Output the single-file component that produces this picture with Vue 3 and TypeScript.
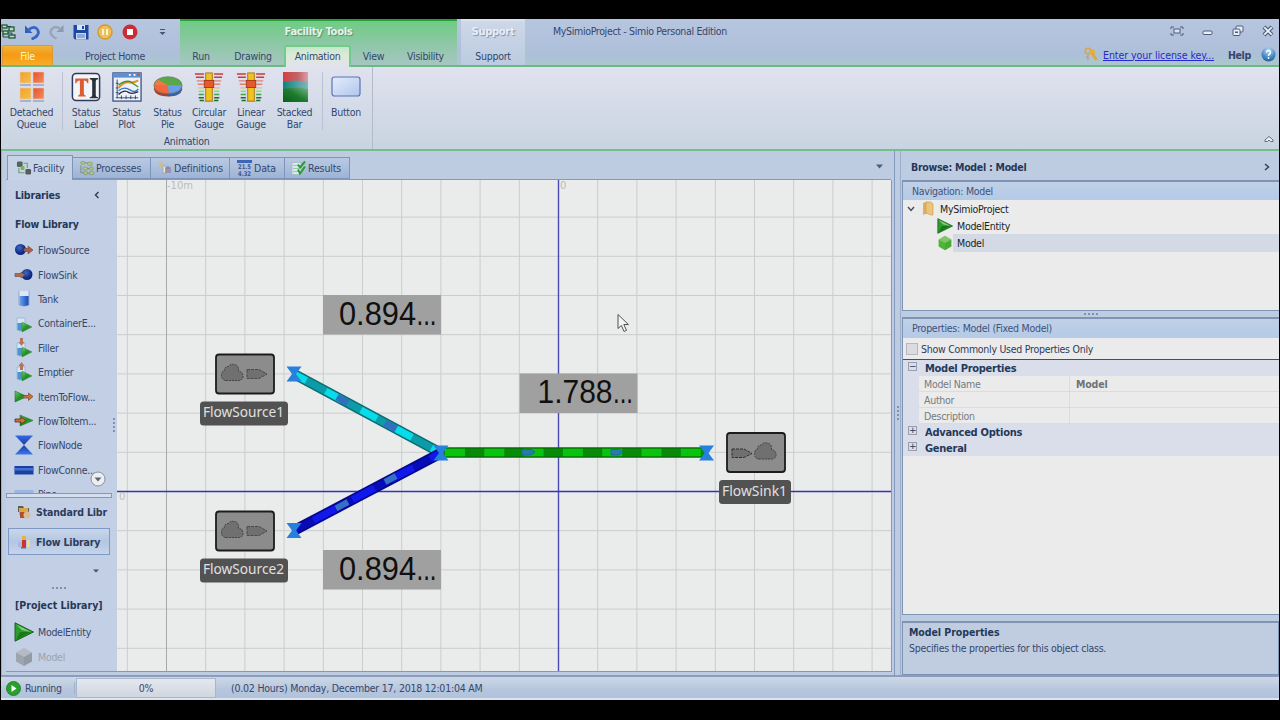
<script setup lang="ts">
interface Item { label: string; icon: string; cls?: string }

const tools: Item[] = [
  { label: 'Status Label', icon: 'label', cls: 'w40' },
  { label: 'Status Plot', icon: 'plot', cls: 'w41' },
  { label: 'Status Pie', icon: 'pie', cls: 'w41' },
  { label: 'Circular Gauge', icon: 'gauge', cls: 'w42' },
  { label: 'Linear Gauge', icon: 'gauge', cls: 'w42' },
  { label: 'Stacked Bar', icon: 'stack', cls: 'w45' },
]

const views: Item[] = [
  { label: 'Facility', icon: 'facility', cls: 'v-facility' },
  { label: 'Processes', icon: 'processes', cls: 'v-processes' },
  { label: 'Definitions', icon: 'definitions', cls: 'v-definitions' },
  { label: 'Data', icon: 'data', cls: 'v-data' },
  { label: 'Results', icon: 'results', cls: 'v-results' },
]

const library: Item[] = [
  { label: 'FlowSource', icon: 'source' },
  { label: 'FlowSink', icon: 'sink' },
  { label: 'Tank', icon: 'tank' },
  { label: 'ContainerE...', icon: 'container' },
  { label: 'Filler', icon: 'filler' },
  { label: 'Emptier', icon: 'emptier' },
  { label: 'ItemToFlow...', icon: 'itf' },
  { label: 'FlowToItem...', icon: 'fti' },
  { label: 'FlowNode', icon: 'node' },
  { label: 'FlowConne...', icon: 'conn' },
  { label: 'Pipe', icon: 'pipe' },
]

const vLines: number[] = Array.from({ length: 20 }, (_, i) => 127.3 + i * 39.2)
const hLines: number[] = Array.from({ length: 12 }, (_, i) => 217.1 + i * 39.2)

const readouts = [
  { x: 323, y: 295, v: '0.894', tx: 16, tw: 77 },
  { x: 519.5, y: 373.5, v: '1.788', tx: 18, tw: 75 },
  { x: 323, y: 550, v: '0.894', tx: 16, tw: 77 },
]
const objects = [
  { x: 215, y: 353.5, name: 'FlowSource1', lx: 200, lw: 88, sink: false },
  { x: 215, y: 510.5, name: 'FlowSource2', lx: 200, lw: 88, sink: false },
  { x: 726, y: 432, name: 'FlowSink1', lx: 719, lw: 72, sink: true },
]
const nodes = [
  { x: 294, y: 374 },
  { x: 441, y: 453 },
  { x: 294, y: 530.5 },
  { x: 706.5, y: 453 },
]
const props = [
  { name: 'Model Name', value: 'Model' },
  { name: 'Author', value: '' },
  { name: 'Description', value: '' },
]
</script>

<template>
  <div class="screen">
    <svg class="defs" width="0" height="0">
      <defs>
        <linearGradient id="gOr" x1="0" y1="0" x2="1" y2="1"><stop offset="0" stop-color="#f6a02c" /><stop offset="1" stop-color="#f0c04c" /></linearGradient>
        <linearGradient id="gRd" x1="0" y1="0" x2="1" y2="1"><stop offset="0" stop-color="#e8502c" /><stop offset="1" stop-color="#f09060" /></linearGradient>
        <linearGradient id="gBt" x1="0" y1="0" x2="1" y2="1"><stop offset="0" stop-color="#e4ecfa" /><stop offset="1" stop-color="#b0c6ee" /></linearGradient>
        <linearGradient id="gGn" x1="0" y1="0" x2="1" y2="1"><stop offset="0" stop-color="#7cc878" /><stop offset=".5" stop-color="#1f8f22" /><stop offset="1" stop-color="#4cb848" /></linearGradient>
        <linearGradient id="gSr" x1="0" y1="0" x2="1" y2="0"><stop offset="0" stop-color="#d04040" /><stop offset=".6" stop-color="#c46468" /><stop offset="1" stop-color="#d8a0a8" /></linearGradient>
        <linearGradient id="gSt" x1="0" y1="0" x2="1" y2="0"><stop offset="0" stop-color="#108080" /><stop offset="1" stop-color="#80b8bc" /></linearGradient>
        <linearGradient id="gSg" x1="0" y1="1" x2="1" y2="0"><stop offset="0" stop-color="#086018" /><stop offset=".5" stop-color="#1c7c30" /><stop offset="1" stop-color="#78b488" /></linearGradient>
        <linearGradient id="gTk" x1="0" y1="0" x2="1" y2="0"><stop offset="0" stop-color="#6ca4ec" /><stop offset="1" stop-color="#1848b8" /></linearGradient>
        <linearGradient id="gNd" x1="0" y1="0" x2="0" y2="1"><stop offset="0" stop-color="#3468e0" /><stop offset=".5" stop-color="#1c3ca8" /><stop offset="1" stop-color="#3c78e8" /></linearGradient>
        <radialGradient id="gBl" cx=".4" cy=".35"><stop offset="0" stop-color="#4068c8" /><stop offset="1" stop-color="#102880" /></radialGradient>
        <radialGradient id="gHp" cx=".5" cy=".2" r=".8"><stop offset="0" stop-color="#b8dcf4" /><stop offset=".6" stop-color="#4c90c8" /><stop offset="1" stop-color="#285c98" /></radialGradient>
      </defs>
      <symbol id="i-queue" viewBox="0 0 30 32">
        <g stroke="#e8ccb8" stroke-width=".6"><rect x="3" y="1" width="11" height="11" fill="url(#gOr)" /><rect x="16" y="1" width="11" height="11" fill="url(#gRd)" /><rect x="3" y="17" width="11" height="11" fill="url(#gOr)" /><rect x="16" y="17" width="11" height="11" fill="url(#gRd)" /></g>
        <path d="M3 13h11v2H3zM16 13h11v2H16zM3 29h11v2H3zM16 29h11v2H16z" fill="#a4b4d8" />
      </symbol>
      <symbol id="i-label" viewBox="0 0 32 32">
        <rect x="1.5" y="1.5" width="29" height="29" rx="4" fill="#f4f5f9" stroke="#2c3c60" stroke-width="1.6" />
        <path d="M4.500 7h14v5h-1.200q-.5-3-3.600-3v14q0 2 2 2v1.200H7.500V25q2 0 2-2V9Q6.400 9 5.700 12H4.500z" fill="#dc5c34" />
        <path d="M20 6.500h9v1.300q-2.600 0-2.600 2v15q0 2 2.600 2V28H20v-1.200q2.600 0 2.600-2v-15q0-2-2.600-2z" fill="#283038" />
      </symbol>
      <symbol id="i-plot" viewBox="0 0 32 32">
        <rect x="1" y="1" width="30" height="30" fill="#eef1f8" stroke="#3c5488" stroke-width="1.400" /><path d="M1 1h30v5H1z" fill="#5c90d0" />
        <path d="M18 3h2M23 3h2" stroke="#fff" stroke-width="2" /><path d="M27 3h2.500" stroke="#d84c3c" stroke-width="2.500" />
        <path d="M5.500 8v20M4 27.500h24M4 12h3M4 17h3M4 22h3M10 25v4M15 25v4M20 25v4M25 25v4" stroke="#34486c" fill="none" />
        <path d="M7 17q6-7 11-6t10-2" stroke="#e89020" stroke-width="2.200" fill="none" /><path d="M7 14q6-5 12-4l9 6" stroke="#48942c" stroke-width="1.500" fill="none" />
        <path d="M7 20q6-5 12-1t9-1" stroke="#3474d0" stroke-width="1.500" fill="none" /><path d="M7 24q6-6 11-2 4 2 10-1" stroke="#2c2c38" stroke-width="1.500" fill="none" />
      </symbol>
      <symbol id="i-pie" viewBox="0 0 32 24">
        <path d="M1 10v5q2 7 15 7t15-7v-5z" fill="#a04434" /><path d="M16 21.900q13 0 15-7v-5H16z" fill="#3c60a8" /><ellipse cx="16" cy="10" rx="15" ry="9" fill="#58a848" />
        <path d="M16 10l1 9Q1 19 1 10z" fill="#f0683c" /><path d="M1 10Q2 7 5 4l11 6z" fill="#f07848" /><path d="M16 10h15q0 8-14 9z" fill="#6c9cec" /><ellipse cx="16" cy="10" rx="15" ry="9" fill="none" stroke="#5c8060" stroke-width=".7" />
      </symbol>
      <symbol id="i-gauge" viewBox="0 0 32 32">
        <path d="M1 2h30M2 5.500h28" stroke="#c83c38" stroke-width="1.600" /><path d="M3 9.500h26M4 13h24" stroke="#e08070" stroke-width="1.500" />
        <path d="M4.500 17h23" stroke="#d4c468" stroke-width="1.200" /><path d="M5 20.500h22" stroke="#98cc8c" stroke-width="1.500" /><path d="M5 24h22" stroke="#40a448" stroke-width="1.600" /><path d="M5 27.500h22M6 30.500h20" stroke="#187028" stroke-width="1.600" />
        <rect x="10.500" y="1" width="11" height="30" fill="#d4dae8" /><rect x="12.500" y="1" width="7" height="30" fill="#f0c420" stroke="#a87810" /><rect x="11" y="9" width="10" height="7.500" fill="#e8582c" stroke="#a83818" />
      </symbol>
      <symbol id="i-stack" viewBox="0 0 26 32"><rect x="1" y="1" width="25" height="10" fill="url(#gSr)" /><path d="M1 11q12-3 25 0v8H1z" fill="url(#gSt)" /><path d="M1 18q12-3 25 0v13H1z" fill="url(#gSg)" /></symbol>
      <symbol id="i-button" viewBox="0 0 30 22"><rect x="1" y="1" width="28" height="19" rx="2.500" fill="url(#gBt)" stroke="#5874b4" stroke-width="1.200" /></symbol>

      <symbol id="i-facility" viewBox="0 0 17 16"><rect x="1" y="1" width="6" height="6" rx="1.500" fill="#54645c" /><rect x="10" y="9" width="6" height="6" rx="1.500" fill="#545c60" /><rect x="5" y="6" width="4" height="4" fill="#78b450" /><path d="M8 3h4v5M3 8v5h6" fill="none" stroke="#7c9484" stroke-width="1.200" /></symbol>
      <symbol id="i-processes" viewBox="0 0 17 16"><g fill="#b8c878" stroke="#7c9068" stroke-width=".7"><rect x="2" y="1" width="4" height="3" rx="1" /><rect x="9" y="2" width="5" height="3" rx="1" /><rect x="4" y="7" width="5" height="3" rx="1" /><rect x="11" y="7" width="4" height="3" rx="1" /><rect x="5" y="12" width="4" height="3" rx="1" /><rect x="11" y="12" width="5" height="3" rx="1" /></g><path d="M6 2.500h3M2 5v8h3M9 8.500h2M9 13.500h2" fill="none" stroke="#688070" stroke-width=".8" /></symbol>
      <symbol id="i-definitions" viewBox="0 0 16 16"><path d="M4 1v7M1 4h6M2 2l4 4" stroke="#e0bc60" stroke-width="1" /><rect x="6" y="6" width="3" height="7" fill="#e8e4d0" stroke="#a09880" stroke-width=".6" /><path d="M9 13V8h4v5M11 6v7" fill="none" stroke="#8c84a8" stroke-width="1.400" /></symbol>
      <symbol id="i-results" viewBox="0 0 16 15"><rect x="1" y="2" width="9" height="12" fill="#dce8ec" stroke="#9cb8c4" stroke-width=".7" /><path d="M2 5h6M2 8h6M2 11h6" stroke="#9cc4b0" /><path d="M7 4l2 3 5-6M7 9l2 4 5-7" fill="none" stroke="#2c9c34" stroke-width="2" /></symbol>

      <symbol id="i-source" viewBox="0 0 20 20"><circle cx="6.500" cy="9.500" r="5.500" fill="url(#gBl)" /><path d="M10 8.500h4V6l5 4-5 4v-2.500h-4z" fill="#a8624c" stroke="#6c4440" stroke-width=".6" /></symbol>
      <symbol id="i-sink" viewBox="0 0 20 20"><circle cx="13" cy="9.500" r="5.500" fill="url(#gBl)" /><path d="M1 8.500h6V7l4 3-4 3v-1.500H1z" fill="#a8704c" stroke="#6c4440" stroke-width=".6" /></symbol>
      <symbol id="i-tank" viewBox="0 0 20 20"><path d="M5 2v14q5 2.500 10 0V2" fill="#dce8f8" stroke="#88a0cc" stroke-width=".8" /><path d="M5.400 7h9.200v9q-4.600 2-9.200 0z" fill="url(#gTk)" /></symbol>
      <symbol id="i-vessel" viewBox="0 0 20 20"><path d="M3 5v12q4 2 8 0V5z" fill="#d4e8f4" stroke="#90b0cc" stroke-width=".7" /><path d="M3.400 10h7v7q-3.500 1.500-7 0z" fill="#4c94cc" /><path d="M8 9l10 5-10 5z" fill="url(#gGn)" stroke="#2c7838" stroke-width=".4" /></symbol>
      <symbol id="i-container" viewBox="0 0 20 20"><use href="#i-vessel" /></symbol>
      <symbol id="i-filler" viewBox="0 0 20 20"><use href="#i-vessel" /><path d="M6 0h3v4h1.500l-3 4-3-4H6z" fill="#b47460" /></symbol>
      <symbol id="i-emptier" viewBox="0 0 20 20"><use href="#i-vessel" /><path d="M6 8V4H4.500l3-4 3 4H9v4z" fill="#b47460" /></symbol>
      <symbol id="i-itf" viewBox="0 0 20 20"><path d="M1 4l12 5.500L1 15z" fill="url(#gGn)" stroke="#146018" stroke-width=".5" /><path d="M9 8.500h5.500V6l4.500 3.500-4.500 4V11H9z" fill="#c87040" stroke="#703818" stroke-width=".6" /></symbol>
      <symbol id="i-fti" viewBox="0 0 20 20"><path d="M6 4l13 5.500L6 15z" fill="url(#gGn)" stroke="#146018" stroke-width=".5" /><path d="M1 8h6V5.500l5 4-5 4V11H1z" fill="#c87040" stroke="#602c18" stroke-width=".8" /></symbol>
      <symbol id="i-node" viewBox="0 0 20 20"><path d="M1 .5h18L10 10zM1 19.500h18L10 10z" fill="url(#gNd)" /></symbol>
      <symbol id="i-conn" viewBox="0 0 20 20"><rect x=".5" y="6" width="19" height="8.500" fill="#1c40a0" /><rect x=".5" y="8" width="19" height="2.500" fill="#4470d0" /></symbol>
      <symbol id="i-pipe" viewBox="0 0 20 20"><rect x=".5" y="6" width="19" height="7" fill="#9cb4e0" /></symbol>
      <symbol id="i-entity" viewBox="0 0 20 20"><path d="M1 .8L19.500 10 1 19.200z" fill="#2c9c2c" stroke="#145c18" stroke-width=".9" /><path d="M2 2.500L17 10 8 8z" fill="#a4dc9c" opacity=".8" /><path d="M2 18L6 10l11 0z" fill="#167a1a" /></symbol>
      <symbol id="i-cube" viewBox="0 0 20 20"><path d="M10 1l8 4.500v9L10 19l-8-4.500v-9z" fill="currentColor" /><path d="M10 1l8 4.500L10 10 2 5.500z" fill="#fff" opacity=".25" /><path d="M10 10l8-4.500v9L10 19z" fill="#000" opacity=".06" /></symbol>
      <symbol id="i-std" viewBox="0 0 16 16"><path d="M2 2h5l1 2h5v4H2z" fill="#645c50" /><path d="M3 4h9v7H3z" fill="#d8a848" /><rect x="4" y="8" width="6" height="6" fill="#b44c30" /><circle cx="11" cy="11" r="3.500" fill="#d4c098" /></symbol>
      <symbol id="i-flow" viewBox="0 0 16 16"><rect x="6" y="2" width="4" height="4" fill="#e8b048" /><rect x="2" y="8" width="4" height="5" fill="#a8b8e0" /><rect x="6" y="6" width="4" height="7" fill="#cc3434" /><path d="M11 6h3v7h-3z" fill="#f0dc84" /><path d="M5 13h5v1.500H5z" fill="#5868b0" /></symbol>
      <symbol id="i-cloud" viewBox="0 0 24 20"><path d="M5 18q-4-1-4-5t3-5q0-4 4-4 2-3 5-2 4 0 5 4v3q4 0 4.500 4t-3.500 5z" fill="#707070" stroke="#404040" stroke-width="1" stroke-dasharray="2 1" /></symbol>
    </svg>

    <div class="window">
      <header class="top">
        <div class="block quick">
          <div class="qa">
            <svg width="15" height="16" viewBox="0 0 15 16"><g fill="#b4dcbc" stroke="#1c4c30" stroke-width="1.200"><rect x="1" y="1" width="5" height="3" /><rect x="8" y="3" width="5" height="4" /><rect x="2" y="7" width="5" height="3" /><rect x="8" y="11" width="6" height="3" /></g><path d="M6 2.500h4M1 5v3M7 9h4v2M2 10v3h6" fill="none" stroke="#1c4c30" /></svg>
            <svg class="q-undo" width="17" height="16" viewBox="0 0 17 16"><path d="M1 1.500v7.500h7.500z" fill="#2c60c0" /><path d="M4 6.500q4-4.500 8-2.500 4 3 1.500 7-1.500 3-6 4" fill="none" stroke="#3468c4" stroke-width="2.800" /></svg>
            <svg class="q-redo" width="17" height="16" viewBox="0 0 17 16"><path d="M15.500 1v7h-7z" fill="#8c98ac" /><path d="M13 6Q9 1.500 5 4 1 7 3.500 11q1.500 2 5 3.500" fill="none" stroke="#98a4b8" stroke-width="2.400" /></svg>
            <svg class="q-save" width="16" height="16" viewBox="0 0 16 16"><path d="M.5 1h15v14.500H2L.5 14z" fill="#1c48a4" /><rect x="4" y="1" width="8" height="5" fill="#d8e4f4" /><path d="M9 2h2v3H9z" fill="#1c48a4" /><rect x="3" y="9" width="10" height="6.500" fill="#c8d8f0" /><path d="M4 11h8M4 13h8" stroke="#5878b8" /></svg>
            <svg class="q-pause" width="16" height="16" viewBox="0 0 16 16"><circle cx="8" cy="8" r="7" fill="#ecc05c" stroke="#d8982c" stroke-width="1.400" /><path d="M6 5v6M10 5v6" stroke="#fff4d0" stroke-width="2" /></svg>
            <svg class="q-stop" width="16" height="16" viewBox="0 0 16 16"><circle cx="8" cy="8" r="7.500" fill="#cc2c34" /><rect x="5" y="5" width="6" height="6" fill="#fff" /></svg>
            <svg class="q-more" width="7" height="8" viewBox="0 0 7 8"><path d="M1 1.500h5" stroke="#445478" /><path d="M.5 4h6l-3 3z" fill="#445478" /></svg>
          </div>
          <div class="tabs"><span class="tab file">File</span><span class="tab home">Project Home</span></div>
        </div>
        <div class="block green">
          <div class="ctx">Facility Tools</div>
          <div class="tabs"><span class="tab t-run">Run</span><span class="tab t-draw">Drawing</span><span class="tab t-anim">Animation</span><span class="tab t-view">View</span><span class="tab t-vis">Visibility</span></div>
        </div>
        <div class="block support">
          <div class="ctx pale">Support</div>
          <div class="tabs"><span class="tab t-sup">Support</span></div>
        </div>
        <div class="block rest">
          <div class="titlebar">
            <span class="title">MySimioProject - Simio Personal Edition</span>
            <span class="wins">
              <svg width="14" height="12" viewBox="0 0 14 12"><path d="M1 4V2h3M10 2h3v2M13 8v2h-3M4 10H1V8" fill="none" stroke="#4c5c7c" /><rect x="4" y="4" width="6" height="4" fill="#dce4f0" stroke="#4c5c7c" /></svg>
              <svg width="12" height="12" viewBox="0 0 12 12"><rect x="1" y="6" width="9" height="3.500" rx="1" fill="#e8eef8" stroke="#4c5c7c" /></svg>
              <svg width="12" height="12" viewBox="0 0 12 12"><rect x="4" y="1" width="7" height="6" rx="1" fill="#e8eef8" stroke="#4c5c7c" /><rect x="1" y="4" width="7" height="6.500" rx="1" fill="#e8eef8" stroke="#4c5c7c" /><rect x="3" y="6.500" width="3" height="1.500" fill="#4c5c7c" /></svg>
              <svg width="12" height="12" viewBox="0 0 12 12"><path d="M2 2l8 8M10 2l-8 8" stroke="#4c5c7c" stroke-width="4" /><path d="M2.300 2.300l7.400 7.400M9.700 2.300L2.300 9.700" stroke="#f0f4fa" stroke-width="1.800" /></svg>
            </span>
          </div>
          <div class="license">
            <svg width="14" height="15" viewBox="0 0 14 15"><circle cx="4" cy="4" r="2.800" fill="none" stroke="#d8a848" stroke-width="1.600" /><path d="M4 6v7M4 10H2" stroke="#b8a490" stroke-width="1.500" /><circle cx="8" cy="5" r="3" fill="#e4b03c" /><path d="M8 6l4.500 7" stroke="#e0a830" stroke-width="2.600" /></svg>
            <a class="link">Enter your license key...</a>
            <b class="help">Help</b>
            <svg width="15" height="15" viewBox="0 0 15 15"><circle cx="7.500" cy="7.500" r="7" fill="url(#gHp)" /><path d="M5.500 5.500q0-2 2-2t2 2q0 1-1 1.500t-1 2" fill="none" stroke="#fff" stroke-width="1.400" /><circle cx="7.500" cy="11" r=".9" fill="#fff" /></svg>
          </div>
        </div>
      </header>

      <section class="ribbon">
        <div class="group">
          <div class="tools">
            <div class="tool w61"><svg width="30" height="32"><use href="#i-queue" /></svg><span>Detached Queue</span></div>
            <i class="sep" />
            <div class="toolset"><div v-for="t in tools" :key="t.label" class="tool" :class="t.cls"><svg width="30" height="32"><use :href="'#i-' + t.icon" /></svg><span>{{ t.label }}</span></div></div>
            <i class="sep" />
            <div class="tool w46"><svg width="30" height="32"><use href="#i-button" /></svg><span>Button</span></div>
          </div>
          <div class="gname">Animation</div>
        </div>
        <svg class="collapse" width="10" height="8" viewBox="0 0 10 8"><path d="M1 5l4-3.500L9 5v1.500H6.500L5 5 3.500 6.500H1z" fill="#eef2f8" stroke="#4c5c7c" stroke-width=".9" /></svg>
      </section>

      <main class="body">
        <section class="left">
          <nav class="views">
            <span v-for="(v, i) in views" :key="v.label" class="view" :class="[v.cls, { active: i === 0 }]">
              <svg v-if="v.icon === 'data'" class="dicon" width="16" height="16" viewBox="0 0 16 16"><rect x="0" y="0" width="15" height="3" fill="#3c64b8" /><text x="1" y="9" textLength="13" lengthAdjust="spacingAndGlyphs">21.5</text><text x="1" y="15.500" textLength="13" lengthAdjust="spacingAndGlyphs">4.32</text></svg>
              <svg v-else width="16" height="16"><use :href="'#i-' + v.icon" /></svg>{{ v.label }}</span>
            <svg class="vmenu" width="7" height="5" viewBox="0 0 7 5"><path d="M0 .5h7L3.500 4.500z" fill="#4c5c84" /></svg>
          </nav>
          <div class="work">
            <aside class="side">
              <div class="shead">Libraries<svg width="6" height="8" viewBox="0 0 6 8"><path d="M4.500 1L1.500 4l3 3" fill="none" stroke="#34405c" stroke-width="1.500" /></svg></div>
              <div class="shead second">Flow Library</div>
              <div class="list">
                <div v-for="l in library" :key="l.label" class="row"><svg width="20" height="20"><use :href="'#i-' + l.icon" /></svg>{{ l.label }}</div>
                <svg class="scroll" width="16" height="16" viewBox="0 0 16 16"><circle cx="8" cy="8" r="7" fill="#eceef2" stroke="#8890a0" /><path d="M4.500 6.500h7L8 10.500z" fill="#5c6474" /></svg>
              </div>
              <div class="splitbar" />
              <div class="lib"><svg width="16" height="16"><use href="#i-std" /></svg>Standard Libr</div>
              <div class="lib on"><svg width="16" height="16"><use href="#i-flow" /></svg>Flow Library</div>
              <div class="more"><svg width="6" height="4" viewBox="0 0 6 4"><path d="M0 .5h6l-3 3z" fill="#44506c" /></svg></div>
              <div class="dots"><i /><i /><i /><i /></div>
              <div class="shead proj">[Project Library]</div>
              <div class="row"><svg width="20" height="20"><use href="#i-entity" /></svg>ModelEntity</div>
              <div class="row dim"><svg width="20" height="20"><use href="#i-cube" /></svg>Model</div>
              <div class="dots vert"><i /><i /><i /><i /></div>
            </aside>
            <svg class="canvas" width="774" height="491" viewBox="117 180 774 491">
              <g stroke="#cbcdcd"><line v-for="x in vLines" :key="'v' + x" :x1="x" :x2="x" y1="180" y2="671" /><line v-for="y in hLines" :key="'h' + y" :y1="y" :y2="y" x1="117" x2="891" /></g>
              <path d="M166.500 180v491" stroke="#a8a8a8" />
              <path d="M558.500 180v491" stroke="#4a4ab4" stroke-width="1.400" /><path d="M117 491.500h774" stroke="#3434b8" stroke-width="1.400" />
              <g class="axis"><text x="167" y="189">-10m</text><text x="560" y="189">0</text><text x="119" y="500">0</text></g>

              <g>
                <path d="M294 374L441 453" stroke="#0a6c74" stroke-width="10.500" /><path d="M294 374L441 453" stroke="#0c9ca8" stroke-width="7.500" /><path d="M294 374L441 453" stroke="#08dce8" stroke-width="7" stroke-dasharray="18 22" stroke-dashoffset="4" />
                <path d="M337 397l11 6M385 423l11 6" stroke="#3070bc" stroke-width="7" />
                <path d="M294 530.500L441 453" stroke="#04088c" stroke-width="10.500" /><path d="M294 530.500L441 453" stroke="#080cb8" stroke-width="7" /><path d="M294 530.500L441 453" stroke="#1018ec" stroke-width="7" stroke-dasharray="25 19" stroke-dashoffset="-22" />
                <path d="M336 508.500l12-6.500M385 482l11-6" stroke="#3470c8" stroke-width="6" />
                <path d="M441 452.500h266" stroke="#086c08" stroke-width="10.500" /><path d="M441 452.500h266" stroke="#078a07" stroke-width="7.500" /><path d="M445 452.500h259" stroke="#08c40c" stroke-width="7.500" stroke-dasharray="20 19.300" />
                <path d="M522 449.500h9l4 2.500-4 3h-9zM611 449.500h8l4 2.500-4 3h-8z" fill="#287ca8" stroke="#1c6c98" />
              </g>
              <path v-for="n in nodes" :key="n.x + '-' + n.y" :transform="`translate(${n.x} ${n.y})`" d="M-7.500-7.500H7.500L2 0 7.500 7.500H-7.500L-2 0z" fill="#2680dc" />

              <g v-for="r in readouts" :key="r.y" :transform="`translate(${r.x} ${r.y})`" class="read">
                <rect width="118" height="39.500" fill="#a0a0a0" /><text :x="r.tx" y="29.500" :textLength="r.tw" lengthAdjust="spacingAndGlyphs">{{ r.v }}</text><text x="93.500" y="29.500" textLength="20" lengthAdjust="spacingAndGlyphs">...</text>
              </g>

              <g v-for="o in objects" :key="o.name">
                <rect :x="o.x + 1" :y="o.y + 1" width="58" height="39" rx="3" fill="#8c8c8c" stroke="#1c1c1c" stroke-width="1.800" />
                <g v-if="!o.sink"><use href="#i-cloud" :x="o.x + 5" :y="o.y + 9" width="25" height="20" /><path :transform="`translate(${o.x + 32} ${o.y + 16})`" d="M0 0h12l8 4.500-8 4.500H0z" fill="#707070" stroke="#484848" stroke-dasharray="3 1" /></g>
                <g v-else><path :transform="`translate(${o.x + 6} ${o.y + 17})`" d="M0 0h12l8 4.500-8 4H0z" fill="#707070" stroke="#303030" stroke-dasharray="3 1" /><use href="#i-cloud" :x="o.x + 27" :y="o.y + 9" width="25" height="20" /></g>
                <rect :x="o.lx" :y="o.y + 48" :width="o.lw" height="24" rx="3.500" fill="#525252" />
                <text class="oname" :x="o.lx + 3" :y="o.y + 63.500" :textLength="o.lw - 7" lengthAdjust="spacingAndGlyphs">{{ o.name }}</text>
              </g>
              <path d="M618 314.500v14l3.400-3 2.600 6 2.500-1.200-2.700-5.800h4.600z" fill="#f4f4f4" stroke="#404040" stroke-width=".9" />
            </svg>
          </div>
        </section>
        <div class="dots gutter"><i /><i /><i /><i /></div>
        <section class="right">
          <div class="browse">Browse: Model : Model<svg width="6" height="8" viewBox="0 0 6 8"><path d="M1 1l3.500 3L1 7" fill="none" stroke="#34405c" stroke-width="1.500" /></svg></div>
          <div class="panel nav">
            <div class="ph">Navigation: Model</div>
            <div class="tree">
              <div class="tr"><svg width="8" height="6" viewBox="0 0 8 6"><path d="M1 1l3 3.500L7 1" fill="none" stroke="#404c60" stroke-width="1.400" /></svg><svg class="folder" width="12" height="15" viewBox="0 0 12 15"><path d="M1 2l4-1.500v12L1 14z" fill="#e0b060" /><path d="M4 1h5l2 2v11H9L4 12z" fill="#ecc47c" stroke="#c89848" stroke-width=".6" /></svg><span>MySimioProject</span></div>
              <div class="tr lvl"><svg width="16" height="16"><use href="#i-entity" /></svg><span>ModelEntity</span></div>
              <div class="tr lvl"><svg class="gcube" width="16" height="16"><use href="#i-cube" /></svg><span class="sel">Model</span></div>
            </div>
          </div>
          <div class="dots mid"><i /><i /><i /><i /></div>
          <div class="panel pp">
            <div class="ph">Properties: Model (Fixed Model)</div>
            <div class="check"><i />Show Commonly Used Properties Only</div>
            <div class="pg">
              <div class="cat"><b class="box">−</b>Model Properties</div>
              <div v-for="p in props" :key="p.name" class="prop"><span>{{ p.name }}</span><b>{{ p.value }}</b></div>
              <div class="cat"><b class="box">+</b>Advanced Options</div>
              <div class="cat"><b class="box">+</b>General</div>
            </div>
          </div>
          <div class="desc"><b>Model Properties</b><span>Specifies the properties for this object class.</span></div>
        </section>
      </main>

      <footer class="status">
        <svg width="15" height="15" viewBox="0 0 15 15"><circle cx="7.500" cy="7.500" r="7" fill="#28a02c" stroke="#187820" stroke-width=".8" /><path d="M5.500 4l5 3.500-5 3.500z" fill="#fff" /></svg>
        <span class="run">Running</span><span class="prog">0%</span><span class="time">(0.02 Hours) Monday, December 17, 2018 12:01:04 AM</span>
      </footer>
    </div>
  </div>
</template>

<style>
html, body { background: #000; }
</style>
<style scoped>
* { box-sizing: border-box; }
.screen { width: 1280px; height: 720px; background: #000; padding: 19px 1px 21px; overflow: hidden; font-family: "DejaVu Sans Condensed", "DejaVu Sans", sans-serif; font-stretch: condensed; font-size: 10.5px; letter-spacing: -0.27px; color: #36466c; white-space: nowrap; }
.defs { position: absolute; }
svg { flex: none; display: block; }
b { letter-spacing: -0.35px; }
.window { height: 680px; background: #bdcce1; display: flex; flex-direction: column; }
.top { height: 48px; flex: none; display: flex; background: linear-gradient(#b7c6df, #aebfda 75%, #abc8cc); border-bottom: 2px solid #6cb884; }
.block { display: flex; flex-direction: column; flex: none; }
.quick { width: 179px; }
.qa { height: 25px; margin-bottom: 1px; display: flex; align-items: center; }
.q-undo { margin-left: 8px; } .q-redo { margin-left: 7px; } .q-save { margin-left: 8px; } .q-pause { margin-left: 8px; } .q-stop { margin-left: 9px; } .q-more { margin-left: 21px; }
.tabs { display: flex; height: 20px; }
.tab { display: flex; align-items: center; justify-content: center; padding-top: 2px; }
.file { width: 51px; margin-left: 1px; background: linear-gradient(#f0b43c, #f59a12 45%, #f8ac28); color: #fff4c8; border: 1px solid #d89a38; border-bottom: 0; border-radius: 2px 2px 0 0; padding-top: 0; }
.home { width: 124px; }
.green { width: 277px; background: linear-gradient(#6fcb84, #8cc8a4 50%, #a6c6c2); border-top: 2px solid #28a03c; }
.ctx { height: 24px; padding-bottom: 4px; display: flex; align-items: center; justify-content: center; font-weight: bold; color: #e4f4e8; text-shadow: 1px 1px 1px #5c8c74; font-size: 11px; }
.t-run { width: 42px; } .t-draw { width: 62px; } .t-anim { width: 67px; background: linear-gradient(#c4e8cc, #dcead8 40%, #e2e2ec); border: 2px solid #70cc88; border-bottom: 0; border-radius: 3px 3px 0 0; height: 22px; padding-top: 0; padding-bottom: 2px; } .t-view { width: 45px; } .t-vis { width: 59px; } .t-sup { width: 100%; }
.support { width: 64px; margin-left: 4px; background: linear-gradient(#cdd8e8, #bccbe0); border-top: 2px solid #d8e0ec; }
.pale { color: #e8eef8; text-shadow: 1px 1px 1px #8090b0; }
.rest { flex: 1; }
.titlebar { height: 25px; display: flex; align-items: center; justify-content: space-between; padding: 0 5px 2px 28px; }
.title { letter-spacing: -0.33px; }
.wins { display: flex; gap: 18px; }
.license { height: 21px; display: flex; align-items: center; justify-content: flex-end; padding-right: 3px; }
.link { color: #2828d0; text-decoration: underline; margin-left: 5px; width: 111px; letter-spacing: -0.06px; }
.help { width: 24px; margin: 0 9px 0 14px; }
.ribbon { height: 84px; flex: none; display: flex; justify-content: space-between; background: linear-gradient(#e0e2ee, #d4dbe8 50%, #c8d4e0); border-bottom: 2px solid #74bd8c; }
.group { width: 372px; border-right: 1px solid #b0bccc; }
.tools { display: flex; height: 67px; }
.toolset { display: flex; width: 259px; padding-left: 3px; }
.tool { display: flex; flex-direction: column; align-items: center; padding-top: 4px; }
.tool span { white-space: normal; text-align: center; line-height: 12px; margin-top: 3px; width: min-content; }
.sep { width: 1px; height: 58px; margin-top: 5px; background: #b8c2d2; }
.w61 { width: 61px; } .w40 { width: 40px; } .w41 { width: 41px; } .w42 { width: 42px; } .w45 { width: 45px; } .w46 { width: 46px; }
.gname { text-align: center; line-height: 14px; }
.collapse { margin: 68px 5px 0 0; }
.body { height: 526px; flex: none; display: flex; border-bottom: 2px solid #8c9cba; }
.left { width: 894px; padding: 4px 3px 0 4px; border-right: 1px solid #8498bc; border-left: 1px solid #a0b0cc; flex: none; }
.views { height: 25px; display: flex; align-items: flex-end; border-bottom: 1px solid #8498bc; letter-spacing: -0.15px; }
.view { height: 22px; display: flex; align-items: center; gap: 1px; background: linear-gradient(#b8c9e2, #9eb4d6); border: 1px solid #7f94bb; border-left: 0; padding-left: 6px; }
.view.active { height: 25px; background: #c6d3e6; border-left: 1px solid #8498bc; border-bottom: 0; margin-bottom: -1px; padding-left: 8px; margin-left: 1px; }
.v-facility { width: 66px; } .v-processes { width: 78px; } .v-definitions { width: 79px; } .v-data { width: 55px; } .v-results { width: 65px; }
.dicon { font-size: 6.5px; font-weight: bold; fill: #44588c; letter-spacing: 0; margin-left: 1px; }
.vmenu { margin: 0 8px 10px auto; }
.work { display: flex; height: 492px; width: 886px; border-right: 1px solid #8498bc; border-bottom: 1px solid #8498bc; }
.side { width: 111px; position: relative; flex: none; background: #c2cfe4; }
.shead { height: 30px; display: flex; align-items: center; justify-content: space-between; font-weight: bold; letter-spacing: -0.2px; color: #273757; padding: 0 17px 0 9px; }
.second { height: 28px; }
.list { height: 255px; overflow: hidden; position: relative; }
.row { height: 24.4px; display: flex; align-items: center; gap: 4px; padding-left: 8px; }
.scroll { position: absolute; left: 84px; top: 233px; }
.splitbar { width: 106px; height: 5px; border: 1px solid #7f98c4; background: #d4deee; }
.lib { height: 27px; margin: 0 7px 3px 2px; display: flex; align-items: center; gap: 4px; padding-left: 7px; font-weight: bold; color: #2c3c5c; border: 1px solid transparent; letter-spacing: -0.15px; }
.on { border-color: #7f98c4; background: linear-gradient(#c8d6ea, #b4c7e2 50%, #c4d4ea); }
.more { height: 25px; display: flex; justify-content: flex-end; align-items: center; padding-right: 18px; }
.dots { display: flex; gap: 2px; justify-content: center; }
.dots i { width: 2px; height: 2px; background: #8090b0; }
.side .dots { padding-right: 6px; padding-top: 4px; }
.proj { height: 30px; margin-top: 1px; letter-spacing: 0; padding-right: 0; }
.dim { color: #9ca4b0; }
.side .vert { position: absolute; flex-direction: column; left: 107px; top: 238px; padding: 0; }
.canvas { background: #eaebeb; }
.axis { font: 10px "DejaVu Sans", sans-serif; letter-spacing: 0; fill: #bcbcbc; }
.read { font: 33px "Liberation Sans", sans-serif; letter-spacing: 0; fill: #101010; }
.oname { font: 14.5px "Noto Sans", sans-serif; letter-spacing: 0; fill: #e0e0e0; }
.gutter { flex-direction: column; width: 5px; align-items: center; }
.right { flex: 1; border-left: 1px solid #9caccb; padding-left: 1px; }
.browse { height: 29px; display: flex; align-items: center; justify-content: space-between; font-weight: bold; color: #273757; padding: 3px 9px 0; letter-spacing: -0.27px; }
.panel { border: 1px solid #7f94b4; border-width: 2px 0 1px 1px; background: #ebebeb; }
.nav { height: 131px; }
.ph { height: 18px; line-height: 18px; padding-left: 9px; background: linear-gradient(#c0d0e6, #b4cae6); color: #40527c; }
.tr { height: 17px; display: flex; align-items: center; color: #202428; padding-left: 4px; }
.folder { margin: 0 6px 0 7px; }
.lvl { padding-left: 34px; }
.lvl span { flex: 1; padding-left: 4px; line-height: 18px; }
.sel { background: #d3dae5; }
.gcube { color: #50b438; }
.mid { height: 6px; align-items: center; }
.pp { height: 298px; }
.pp .ph { height: 19px; }
.check { height: 21px; display: flex; align-items: center; gap: 3px; padding-left: 3px; color: #2c3c5c; }
.check i { width: 12px; height: 12px; border: 1px solid #b8b8c0; background: #dcdce0; }
.pg { border-top: 1px solid #40506c; }
.cat { height: 16px; background: #dadeeb; display: flex; align-items: center; font-weight: bold; font-size: 11px; color: #243858; padding-left: 5px; }
.box { width: 9px; height: 9px; border: 1px solid #98a0b0; font: 9px/7px "DejaVu Sans", sans-serif; letter-spacing: 0; text-align: center; margin: 0 8px 3px 0; }
.prop { height: 16px; display: flex; background: linear-gradient(90deg, #dadeeb 16px, #ebebeb 16px); line-height: 16px; color: #747c80; }
.prop span { width: 151px; margin-left: 16px; padding-left: 5px; border-bottom: 1px solid #dcdcdc; border-right: 1px solid #dcdcdc; }
.prop b { flex: 1; padding-left: 6px; border-bottom: 1px solid #dcdcdc; color: #6c7478; letter-spacing: -0.15px; }
.desc { height: 54px; margin-top: 6px; border: 1px solid #7f94b4; border-top-width: 2px; background: #c0cde1; padding: 2px 6px; display: flex; flex-direction: column; line-height: 15.500px; color: #36466c; }
.desc b { color: #243858; letter-spacing: -0.05px; }
.status { flex: 1; display: flex; align-items: center; background: linear-gradient(#ccd8e8, #b6c6dc 60%, #b0c2dc); border-bottom: 2px solid #dce4f0; padding-left: 5px; padding-top: 1px; }
.run { width: 50px; margin-left: 4px; border-right: 1px solid #a0b0c8; }
.prog { width: 140px; height: 20px; line-height: 18px; margin-left: 1px; text-align: center; background: linear-gradient(#e4e8ee, #d0d6e0); border: 1px solid #a8b6cc; }
.time { margin-left: 15px; letter-spacing: -0.22px; }
</style>
